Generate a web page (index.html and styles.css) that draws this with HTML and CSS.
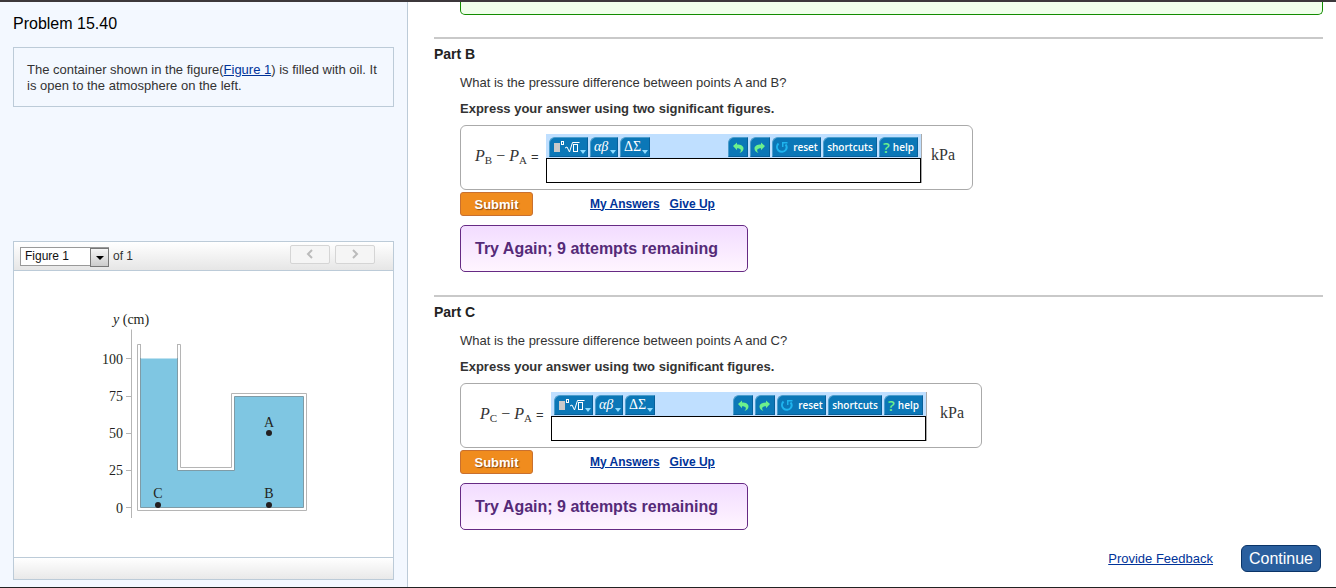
FILE: index.html
```
<!DOCTYPE html>
<html lang="en">
<head>
  <meta charset="UTF-8" />
  <meta name="viewport" content="width=device-width, initial-scale=1.0"/>
  <title>Problem 15.40</title>
  <link rel="stylesheet" href="styles.css">
</head>
<body>
  <!-- shared toolbar icons -->
  <svg class="sprite" aria-hidden="true">
    <symbol id="templates" viewBox="0 0 30 16">
      <rect x="1" y="4" width="6" height="9" fill="#c9c9c9"/>
      <rect x="8.500" y="2.500" width="2" height="3" fill="none" stroke="#fff"/>
      <path d="M12 9l2-1 2.500 5L19.500 3.500h7" fill="none" stroke="#fff"/>
      <rect x="20.500" y="5.500" width="4" height="7" fill="none" stroke="#fff"/>
    </symbol>
    <symbol id="undo" viewBox="0 0 14 14">
      <path d="M2 6L6 2.500v2c4 0 6.500 1.500 6.500 4 0 2-1.500 3.600-4 4.500 1.200-1.200 1.600-2.300 1.200-3.200-.4-1-1.700-1.500-3.700-1.500v2z" fill="#6df08c"/>
    </symbol>
    <symbol id="reset" viewBox="0 0 14 14">
      <path d="M3.500 3.500C1.500 5.500 1.500 8.500 3.500 10.500c2 1.800 5.500 1.800 7.200-.5 1.300-1.800 1.100-4-.2-5.500" fill="none" stroke="#1fb4ee" stroke-width="2"/>
      <path d="M7 2h5.500v1.500H8.500V7H7z" fill="#1fb4ee"/>
    </symbol>
  </svg>

  <div class="page">
    <aside class="sidebar">
      <h1>Problem 15.40</h1>
      <p class="intro">The container shown in the figure(<a href="#figure">Figure 1</a>) is filled with oil. It is open to the atmosphere on the left.</p>

      <section class="figure" id="figure">
        <div class="figure-bar">
          <span class="select-box">
            <select id="figure-select" aria-label="Figure">
              <option>Figure 1</option>
            </select>
          </span>
          <label for="figure-select">of 1</label>
          <div class="figure-nav">
            <button type="button" aria-label="Previous figure" disabled>
              <svg width="8" height="10" viewBox="0 0 8 10"><path d="M6 1L2 5l4 4" fill="none" stroke="#bbb" stroke-width="2"/></svg>
            </button>
            <button type="button" aria-label="Next figure" disabled>
              <svg width="8" height="10" viewBox="0 0 8 10"><path d="M2 1l4 4-4 4" fill="none" stroke="#bbb" stroke-width="2"/></svg>
            </button>
          </div>
        </div>
        <div class="figure-body">
          <svg class="diagram" width="260" height="230" viewBox="0 0 260 230">
            <path d="M60.500 58.500H97.500V170.500H154.500V96.500H223.500V207.500H60.500z" fill="#7fc6e2"/>
            <path d="M51.500 29.500V218M46 58.500h5M46 96.500h5M46 133.500h5M46 170.500h5M46 207.500h5" fill="none" stroke="#b5b5b5"/>
            <path d="M60.500 44.500V207.500H223.500V96.500H154.500V170.500H97.500V44.500" fill="none" stroke="#7f9ba6"/>
            <path d="M60.500 44.500H57.500V210.500H226.500V93.500H151.500V167.500H100.500V44.500H97.500" fill="none" stroke="#b5b5b5"/>
            <path d="M60.500 44v14M97.500 44v14" stroke="#b5b5b5"/>
            <g fill="#231f20">
              <circle cx="189" cy="133" r="3"/>
              <circle cx="78" cy="205" r="3"/>
              <circle cx="189" cy="205" r="3"/>
              <text x="33" y="24"><tspan font-style="italic">y</tspan> (cm)</text>
              <g text-anchor="end">
                <text x="43" y="64">100</text>
                <text x="43" y="101">75</text>
                <text x="43" y="138">50</text>
                <text x="43" y="175">25</text>
                <text x="43" y="213">0</text>
              </g>
              <g text-anchor="middle">
                <text x="189" y="127">A</text>
                <text x="78" y="198">C</text>
                <text x="189" y="198">B</text>
              </g>
            </g>
          </svg>
        </div>
        <div class="figure-foot"></div>
      </section>
    </aside>

    <main class="content">
      <div class="correct"></div>

      <section class="part">
        <h2>Part B</h2>
        <form class="part-body">
          <p>What is the pressure difference between points A and B?</p>
          <p class="instructions">Express your answer using two significant figures.</p>
          <div class="answer">
            <label class="math" for="answer-b"><i>P</i><sub>B</sub> − <i>P</i><sub>A</sub> <span class="equals">=</span></label>
            <div class="editor">
              <div class="toolbar">
                <button type="button" class="menu tpl" aria-label="Templates"><svg width="30" height="16"><use href="#templates"/></svg></button>
                <button type="button" class="menu greek"><i>αβ</i></button>
                <button type="button" class="menu caps">ΔΣ</button>
                <button type="button" class="icon first" aria-label="Undo"><svg width="14" height="14"><use href="#undo"/></svg></button>
                <button type="button" class="icon redo" aria-label="Redo"><svg width="14" height="14"><use href="#undo"/></svg></button>
                <button type="button" class="reset"><svg width="14" height="14"><use href="#reset"/></svg>reset</button>
                <button type="button" class="shortcuts">shortcuts</button>
                <button type="button" class="help"><span class="mark">?</span>help</button>
              </div>
              <input type="text" id="answer-b">
            </div>
            <span class="unit">kPa</span>
          </div>
          <div class="actions">
            <button type="submit" class="submit">Submit</button>
            <a href="#">My Answers</a>
            <a href="#">Give Up</a>
          </div>
          <div class="feedback">Try Again; 9 attempts remaining</div>
        </form>
      </section>

      <section class="part">
        <h2>Part C</h2>
        <form class="part-body">
          <p>What is the pressure difference between points A and C?</p>
          <p class="instructions">Express your answer using two significant figures.</p>
          <div class="answer wide">
            <label class="math" for="answer-c"><i>P</i><sub>C</sub> − <i>P</i><sub>A</sub> <span class="equals">=</span></label>
            <div class="editor">
              <div class="toolbar">
                <button type="button" class="menu tpl" aria-label="Templates"><svg width="30" height="16"><use href="#templates"/></svg></button>
                <button type="button" class="menu greek"><i>αβ</i></button>
                <button type="button" class="menu caps">ΔΣ</button>
                <button type="button" class="icon first" aria-label="Undo"><svg width="14" height="14"><use href="#undo"/></svg></button>
                <button type="button" class="icon redo" aria-label="Redo"><svg width="14" height="14"><use href="#undo"/></svg></button>
                <button type="button" class="reset"><svg width="14" height="14"><use href="#reset"/></svg>reset</button>
                <button type="button" class="shortcuts">shortcuts</button>
                <button type="button" class="help"><span class="mark">?</span>help</button>
              </div>
              <input type="text" id="answer-c">
            </div>
            <span class="unit">kPa</span>
          </div>
          <div class="actions">
            <button type="submit" class="submit">Submit</button>
            <a href="#">My Answers</a>
            <a href="#">Give Up</a>
          </div>
          <div class="feedback">Try Again; 9 attempts remaining</div>
        </form>
      </section>

      <div class="page-foot">
        <a href="#">Provide Feedback</a>
        <button type="button" class="continue">Continue</button>
      </div>
    </main>
  </div>
</body>
</html>
```
FILE: styles.css
```
* {
  box-sizing: border-box;
}
body {
  margin: 0;
  font-family: "Liberation Sans", Arial, sans-serif;
  font-size: 13px;
  line-height: 16px;
  color: #333;
  background: white;
}
a {
  color: #003399;
}
h1, h2, p {
  margin: 0;
}
button {
  margin: 0;
  padding: 0;
  font-family: inherit;
  cursor: pointer;
}
.sprite {
  display: none;
}
.page {
  display: flex;
  min-height: 100vh;
  border-top: 2px solid #3c383b;
  border-bottom: 1px solid #222;
}

/* left column */
.sidebar {
  display: flex;
  flex-direction: column;
  width: 408px;
  flex-shrink: 0;
  padding: 12px 13px 7px;
  background: #f3f8ff;
  border-right: 1px solid #bccbd8;
}
h1 {
  font-size: 16px;
  line-height: 20px;
  font-weight: normal;
  color: black;
}
.intro {
  margin-top: 13px;
  padding: 14px 13px 12px;
  border: 1px solid #bccbd8;
}
.figure {
  margin-top: auto;
  background: white;
  border: 1px solid #bccbd8;
}
.figure-bar {
  display: flex;
  align-items: center;
  gap: 4px;
  height: 29px;
  padding: 0 18px 0 6px;
  font-size: 12px;
  background: linear-gradient(#fff, #e6e6e6);
  border-bottom: 1px solid #bccbd8;
}
.select-box {
  position: relative;
  display: flex;
}
.select-box select {
  appearance: none;
  width: 89px;
  height: 19px;
  padding: 0 4px;
  font-family: inherit;
  font-size: 12px;
  color: #111;
  background: white;
  border: 1px solid #999;
  border-radius: 0;
}
.select-box::before {
  content: "";
  position: absolute;
  top: 1px;
  right: 0;
  width: 17px;
  height: 17px;
  background: linear-gradient(#f5f5f5, #ccc);
  border: 1px solid #777;
  pointer-events: none;
}
.select-box::after {
  content: "";
  position: absolute;
  top: 9px;
  right: 5px;
  border: 4px solid transparent;
  border-top-color: black;
  border-bottom: 0;
  pointer-events: none;
}
.figure-nav {
  display: flex;
  gap: 5px;
  margin-left: auto;
  padding-bottom: 4px;
}
.figure-nav button {
  display: flex;
  align-items: center;
  justify-content: center;
  width: 40px;
  height: 19px;
  background: #f5f5f5;
  border: 1px solid #d5d5d5;
  border-radius: 2px;
}
.figure-body {
  padding: 29px 0 27px 66px;
}
.diagram {
  display: block;
  font-family: "Liberation Serif", "Times New Roman", serif;
  font-size: 14px;
}
.figure-foot {
  height: 22px;
  background: linear-gradient(#fff, #e9e9e9);
  border-top: 1px solid #bccbd8;
}

/* right column */
.content {
  display: flex;
  flex-direction: column;
  flex: 1;
  padding: 0 13px 15px 26px;
}
.correct {
  height: 13px;
  margin: 0 0 22px 26px;
  background: #f0ffeb;
  border: 1px solid #128c00;
  border-top: 0;
  border-radius: 0 0 5px 5px;
}
.part {
  padding-top: 7px;
  border-top: 2px solid #c9c9c9;
}
.part + .part {
  margin-top: 23px;
}
h2 {
  font-size: 14px;
  line-height: 16px;
  color: #222;
}
.part-body {
  padding: 13px 0 0 26px;
}
.instructions {
  margin: 10px 0 8px;
  font-weight: bold;
}
.answer {
  display: flex;
  align-items: center;
  width: fit-content;
  height: 65px;
  padding: 2px 17px 0 14px;
  border: 1px solid #aaa;
  border-radius: 6px;
}
.wide {
  padding-left: 19px;
}
.math {
  width: 71px;
  padding-bottom: 4px;
  font-family: "Liberation Serif", "Times New Roman", serif;
  font-size: 16px;
  white-space: nowrap;
}
.math sub {
  font-size: 11px;
  line-height: 0;
  vertical-align: -3px;
}
.equals {
  font-family: "Liberation Sans", Arial, sans-serif;
  font-size: 13px;
}
.editor {
  width: 376px;
  border-right: 1px solid #aaa;
}
.toolbar {
  display: flex;
  gap: 2px;
  padding: 3px 3px 1px;
  background: #bfdfff;
}
.toolbar button {
  display: flex;
  align-items: center;
  justify-content: center;
  height: 20px;
  font-family: "Open Sans", "Noto Sans", sans-serif;
  font-size: 10px;
  font-weight: 600;
  color: white;
  background: #0b77b7;
  border: 1px solid #07609a;
  border-top-color: #4b9dcc;
  border-left-color: #4b9dcc;
  border-radius: 6px 0 0 0;
}
.toolbar .menu {
  justify-content: flex-start;
  padding-left: 3px;
  font-family: "Liberation Serif", serif;
  font-size: 14px;
  font-weight: normal;
}
.menu::after {
  content: "";
  align-self: flex-end;
  margin: 0 1px 2px auto;
  border: 3px solid transparent;
  border-top: 4px solid #8fdcff;
  border-bottom: 0;
}
.tpl {
  width: 39px;
}
.tpl svg {
  flex-shrink: 0;
  margin-right: -5px;
}
.greek {
  width: 28px;
}
.caps {
  width: 30px;
}
.icon {
  width: 20px;
}
.first {
  margin-left: auto;
}
.redo svg {
  transform: scaleX(-1);
}
.reset {
  width: 49px;
  gap: 4px;
}
.shortcuts {
  width: 54px;
}
.help {
  width: 39px;
  gap: 3px;
}
.mark {
  font-size: 15px;
  color: #6df08c;
}
.editor input {
  display: block;
  width: 100%;
  height: 25px;
  padding: 0 4px;
  font-size: 16px;
  border: 1px solid black;
  border-radius: 0;
}
.unit {
  margin-left: 9px;
  padding-bottom: 8px;
  font-family: "Liberation Serif", "Times New Roman", serif;
  font-size: 16px;
}
.wide .unit {
  margin-left: 13px;
}
.actions {
  display: flex;
  align-items: center;
  gap: 10px;
  margin: 2px 0 9px;
  font-size: 12px;
  line-height: 17px;
  font-weight: bold;
}
.submit {
  width: 73px;
  height: 24px;
  margin-right: 47px;
  font-size: 13px;
  font-weight: bold;
  color: white;
  text-shadow: 1px 1px 1px #8a4a10;
  background: #f08c1e;
  border: 1px solid #c87030;
  border-radius: 3px;
}
.feedback {
  width: 288px;
  padding: 13px 14px;
  font-size: 16px;
  line-height: 19px;
  font-weight: bold;
  color: #552a78;
  background: linear-gradient(#f2dcff, #fff5ff);
  border: 1px solid #662a84;
  border-radius: 5px;
}
.page-foot {
  display: flex;
  align-items: center;
  justify-content: flex-end;
  gap: 28px;
  margin-top: auto;
  padding-right: 2px;
}
.continue {
  width: 80px;
  height: 27px;
  font-size: 16px;
  color: white;
  background: #2a5f9e;
  border: 1px solid #0a3468;
  border-radius: 6px;
}
```
